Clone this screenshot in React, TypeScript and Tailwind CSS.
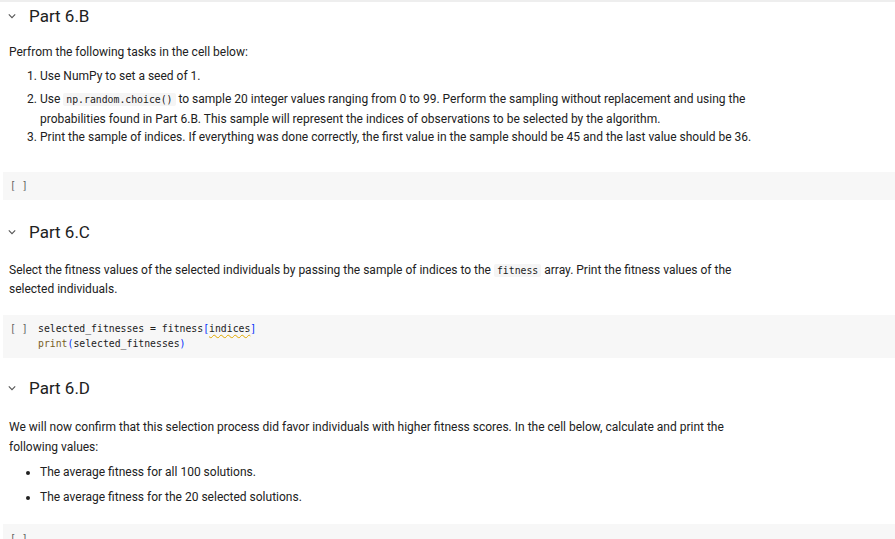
import React from "react";

const Chevron = () => (
  <svg width="10" height="10" viewBox="0 0 10 10" className="shrink-0">
    <path d="M1.8 3.4 L5 6.6 L8.2 3.4" fill="none" stroke="#555" strokeWidth="1.1" />
  </svg>
);

const Heading = ({ text }: { text: string }) => (
  <div className="flex h-[28px] items-center pl-[7px]">
    <Chevron />
    <span className="ml-[12px] text-[17px] leading-[24px] text-[#212121]">{text}</span>
  </div>
);

const Code = ({ children }: { children: React.ReactNode }) => (
  <code className="rounded-[2px] bg-[#f5f5f5] px-[3px] py-[1px] font-['DejaVu_Sans_Mono',monospace] text-[9.8px] text-[#212121]">
    {children}
  </code>
);

const Bracket = () => (
  <span className="w-[28px] shrink-0 pl-[7px] font-['DejaVu_Sans_Mono',monospace] text-[9.8px] leading-[15px] text-[#616161]">
    [ ]
  </span>
);

export default function App() {
  return (
    <div className="w-[895px] h-[539px] overflow-hidden bg-white font-['Roboto',sans-serif] text-[12px] text-[#212121]">
      <div className="h-[2px] bg-[#eeeeee]" />
      <Heading text="Part 6.B" />
      <div className="w-[766px] pl-[9px]">
        <p className="mt-[13px] leading-[19px]">Perfrom the following tasks in the cell below:</p>
        <ol className="mt-[5px] list-decimal pl-[31px] leading-[18.5px]">
          <li className="mb-[4.5px]">Use NumPy to set a seed of 1.</li>
          <li>
            Use <Code>np.random.choice()</Code> to sample 20 integer values ranging from 0 to 99. Perform the sampling without replacement and using the probabilities found in Part 6.B. This sample will represent the indices of observations to be selected by the algorithm.
          </li>
          <li>Print the sample of indices. If everything was done correctly, the first value in the sample should be 45 and the last value should be 36.</li>
        </ol>
      </div>
      <div className="ml-[3px] mt-[25px] flex h-[28px] items-center bg-[#f7f7f7]">
        <Bracket />
      </div>
      <div className="mt-[18px]">
        <Heading text="Part 6.C" />
      </div>
      <div className="w-[766px] pl-[9px]">
        <p className="mt-[15px] leading-[19px]">
          Select the fitness values of the selected individuals by passing the sample of indices to the <Code>fitness</Code> array. Print the fitness values of the selected individuals.
        </p>
      </div>
      <div className="ml-[3px] mt-[16px] flex h-[43px] items-start bg-[#f7f7f7] pt-[6px]">
        <Bracket />
        <pre className="ml-[7px] font-['DejaVu_Sans_Mono',monospace] text-[9.8px] leading-[15px] text-[#212121]">
          selected_fitnesses = fitness<span className="text-[#0431fa]">[</span>
          <span className="underline decoration-wavy decoration-[#e0a800] underline-offset-2">indices</span>
          <span className="text-[#0431fa]">]</span>
          {"\n"}
          <span className="text-[#795e26]">print</span>
          <span className="text-[#0431fa]">(</span>selected_fitnesses<span className="text-[#0431fa]">)</span>
        </pre>
      </div>
      <div className="mt-[16px]">
        <Heading text="Part 6.D" />
      </div>
      <div className="w-[766px] pl-[9px]">
        <p className="mt-[15px] leading-[20px]">
          We will now confirm that this selection process did favor individuals with higher fitness scores. In the cell below, calculate and print the following values:
        </p>
        <ul className="mt-[6px] list-disc pl-[31px] leading-[19px]">
          <li className="mb-[6px]">The average fitness for all 100 solutions.</li>
          <li>The average fitness for the 20 selected solutions.</li>
        </ul>
      </div>
      <div className="ml-[3px] mt-[17px] flex h-[29px] items-center bg-[#f7f7f7]">
        <Bracket />
      </div>
    </div>
  );
}
